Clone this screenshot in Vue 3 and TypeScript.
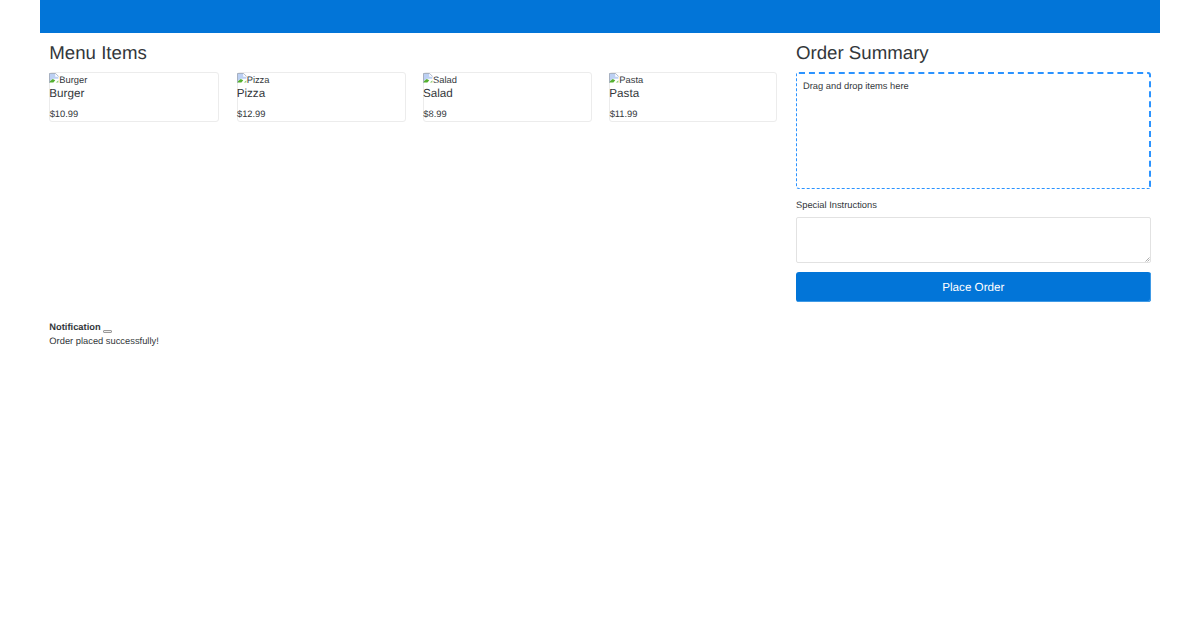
<script setup lang="ts">
interface Item { name: string; price: string }
const items: Item[] = [
  { name: 'Burger', price: '$10.99' },
  { name: 'Pizza', price: '$12.99' },
  { name: 'Salad', price: '$8.99' },
  { name: 'Pasta', price: '$11.99' },
]
</script>

<template>
  <div class="page">
    <header class="bar"></header>
    <main class="main">
      <section class="menu">
        <h2 class="heading">Menu Items</h2>
        <div class="cards">
          <article v-for="item in items" :key="item.name" class="card">
            <div class="pic">
              <svg class="broken" width="10" height="10" viewBox="0 0 16 16">
                <path d="M0 0H10.5L16 5.5V16H0Z" fill="#fff" />
                <path d="M1 15V1H10V6H15V9L6 9L1 13Z" fill="#bcd0f3" />
                <path d="M0.7 16V0.7H10.5" fill="none" stroke="#98a3b5" stroke-width="1.4" />
                <path d="M10.5 0.7L15.5 5.7" fill="none" stroke="#98a3b5" stroke-width="1.2" />
                <path d="M1.4 15V13L6 9.5L10 11.5L7 15Z" fill="#55b02f" />
                <path d="M11 15L15 11.5V15Z" fill="#8ccb6f" />
              </svg><span class="alt">{{ item.name }}</span>
            </div>
            <div class="title">{{ item.name }}</div>
            <div class="price">{{ item.price }}</div>
          </article>
        </div>
      </section>
      <section class="order">
        <h2 class="heading">Order Summary</h2>
        <div class="drop">Drag and drop items here</div>
        <label class="label" for="notes">Special Instructions</label>
        <div class="notes-wrap">
          <textarea id="notes" class="notes"></textarea>
          <svg class="grip" width="5" height="5" viewBox="0 0 5 5">
            <path d="M0.5 4.5L4.5 0.5M2.5 4.5L4.5 2.5" stroke="#8a8a8a" stroke-width="0.7" fill="none" />
          </svg>
        </div>
        <button class="place" type="button">Place Order</button>
      </section>
    </main>
    <div class="toast">
      <div class="toast-head"><strong>Notification</strong><button class="close" type="button"></button></div>
      <div class="toast-body">Order placed successfully!</div>
    </div>
  </div>
</template>

<style>
html, body { margin: 0; background: #fff; }
</style>

<style scoped>
.page {
  width: 1120px;
  margin: 0 auto;
  font-family: "Liberation Sans", Arial, sans-serif;
  font-size: 9.33px;
  line-height: 14px;
  color: #33373b;
  text-rendering: geometricPrecision;
}
.bar { height: 33px; background: #0275d8; }
.main {
  display: grid;
  grid-template-columns: 728px 354.67px;
  column-gap: 18.67px;
  padding: 0 9.33px;
  height: 280px;
}
.heading {
  margin: 8px 0 7px;
  font-size: 18.67px;
  line-height: 24px;
  font-weight: 500;
}
.cards {
  display: grid;
  grid-template-columns: 170px 169px 169px 168px;
  column-gap: 17.33px;
}
.card {
  height: 50px;
  box-sizing: border-box;
  border: 1px solid #ececec;
  border-radius: 3px;
}
.pic { height: 13px; display: flex; align-items: flex-start; margin-left: -1px; }
.broken { flex: none; }
.alt { line-height: 14px; }
.title { font-size: 11.67px; line-height: 14px; margin-top: 1px; margin-left: -1px; }
.price { margin-top: 6px; margin-left: -0.7px; }
.order { display: flex; flex-direction: column; }
.drop {
  height: 117px;
  box-sizing: border-box;
  border-style: dashed;
  border-color: #2b93ff;
  border-width: 2px 2px 1px 1px;
  border-radius: 3px;
  padding: 5px 6px;
}
.label { margin-top: 9px; }
.notes-wrap { position: relative; margin-top: 5px; height: 46px; }
.notes {
  display: block;
  box-sizing: border-box;
  height: 46px;
  width: 100%;
  border: 1px solid #e2e2e2;
  border-radius: 2px;
  outline: none;
  resize: none;
}
.grip { position: absolute; right: 1px; bottom: 1px; }
.place {
  margin-top: 9px;
  height: 30px;
  background: #0275d8;
  color: #fff;
  border: 0;
  border-radius: 3px;
  box-shadow: inset -1px -1px 0 #3f9ae6;
  font-family: inherit;
  font-size: 11.67px;
  text-rendering: geometricPrecision;
}
.toast { padding: 7px 9.33px 0; }
.toast-head { display: flex; align-items: flex-end; height: 14px; }
.close {
  width: 9px;
  height: 3px;
  margin: 0 0 1px 2px;
  padding: 0;
  background: #efefef;
  border: 1px solid #999;
  border-radius: 1px;
}
</style>
